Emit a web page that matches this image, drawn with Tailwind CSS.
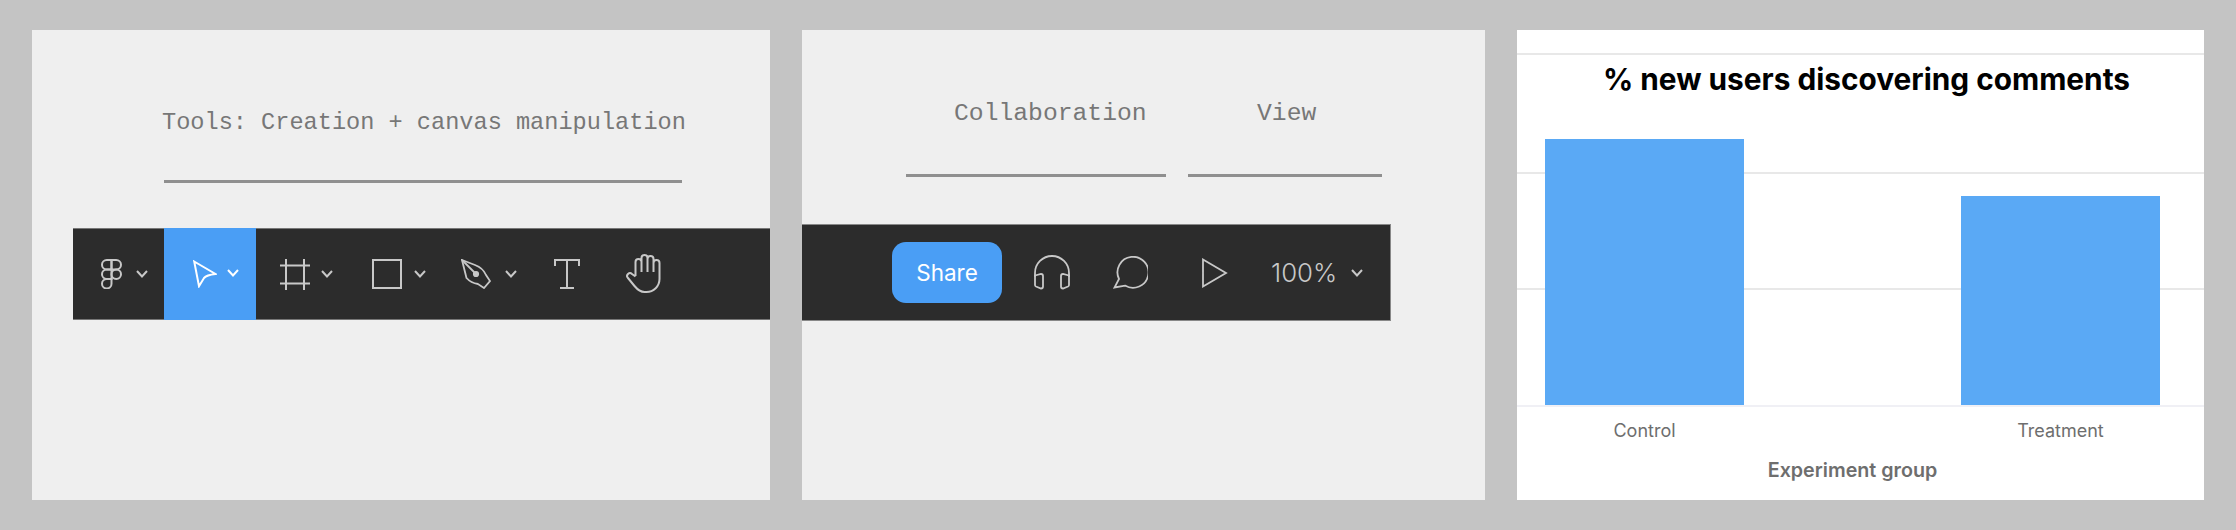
<!DOCTYPE html>
<html lang="en">
<head>
    <meta charset="UTF-8">
    <title>Toolbar and experiment results</title>
    <script src="https://cdn.jsdelivr.net/npm/@tailwindcss/browser@4"></script>
</head>
<body class="bg-[#c4c4c4] font-['Inter',sans-serif]">
    <div class="flex h-[530px] w-[2236px] gap-8 px-8 py-[30px]">

        <!-- Tools panel -->
        <div class="w-[738px] bg-[#efefef] flex flex-col">
            <div class="ml-[130px] mt-[77px] h-8 leading-8 text-[23.6px] text-[#777] font-['Liberation_Mono',monospace] whitespace-nowrap">Tools: Creation + canvas manipulation</div>
            <div class="ml-[132px] mt-[41px] h-[3px] w-[518px] bg-[#8f8f8f]"></div>
            <div class="mt-[45px] ml-[41px] h-[92px] bg-[#2c2c2c] border-y border-[#777] flex items-center text-[#c8c8c8]">
                <div class="w-[91px] flex items-center pl-7">
                    <svg class="w-[21px] h-[30px]" viewBox="0 0 21 30" fill="none" stroke="currentColor" stroke-width="2">
                        <path d="M10.5 1H5.75a4.75 4.75 0 0 0 0 9.5h4.75z"/>
                        <path d="M10.5 1h4.75a4.75 4.75 0 0 1 0 9.5h-4.75z"/>
                        <path d="M10.5 10.5H5.75a4.75 4.75 0 0 0 0 9.5h4.75z"/>
                        <circle cx="15.25" cy="15.25" r="4.75"/>
                        <path d="M10.5 20H5.75a4.75 4.75 0 1 0 4.75 4.75z"/>
                    </svg>
                    <svg class="w-[12px] h-[8px] ml-[14px]" viewBox="0 0 12 8" fill="none" stroke="currentColor" stroke-width="2"><path d="M1 1l5 5.5L11 1"/></svg>
                </div>
                <div class="w-[92px] h-[92px] bg-[#4a9ef5] flex items-center pl-[29px] text-white">
                    <svg class="w-[24px] h-[28px]" viewBox="0 0 24 28" fill="none" stroke="currentColor" stroke-width="2"><path d="M1.2 1.5L22.5 14Q13.5 15 11 18L6 26.2z"/></svg>
                    <svg class="w-[12px] h-[8px] ml-[10px] -mt-[3px]" viewBox="0 0 12 8" fill="none" stroke="currentColor" stroke-width="2"><path d="M1 1l5 5.5L11 1"/></svg>
                </div>
                <div class="flex items-center ml-[24px]">
                    <svg class="w-[30px] h-[31px]" viewBox="0 0 30 31" fill="none" stroke="currentColor" stroke-width="2"><path d="M0 6.5h30M0 24.5h30M6 0v31M24 0v31"/></svg>
                    <svg class="w-[12px] h-[8px] ml-[11px]" viewBox="0 0 12 8" fill="none" stroke="currentColor" stroke-width="2"><path d="M1 1l5 5.5L11 1"/></svg>
                </div>
                <div class="flex items-center ml-[39px]">
                    <svg class="w-[30px] h-[30px]" viewBox="0 0 30 30" fill="none" stroke="currentColor" stroke-width="2"><rect x="1" y="1" width="28" height="28"/></svg>
                    <svg class="w-[12px] h-[8px] ml-[12px]" viewBox="0 0 12 8" fill="none" stroke="currentColor" stroke-width="2"><path d="M1 1l5 5.5L11 1"/></svg>
                </div>
                <div class="flex items-center ml-[35px]">
                    <svg class="w-[30px] h-[30px]" viewBox="0 0 30 30" fill="none" stroke="currentColor" stroke-width="1.8">
                        <path d="M1 1l13 5q8 3 11 10l4 6-6 7-6-4Q10 24 5.500 19z"/>
                        <path d="M1 1l13 13"/>
                        <circle cx="15" cy="15" r="2.200" fill="currentColor"/>
                    </svg>
                    <svg class="w-[12px] h-[8px] ml-[14px]" viewBox="0 0 12 8" fill="none" stroke="currentColor" stroke-width="2"><path d="M1 1l5 5.5L11 1"/></svg>
                </div>
                <svg class="w-[26px] h-[30px] ml-[37px]" viewBox="0 0 26 30" fill="none" stroke="currentColor" stroke-width="2"><path d="M1 7V1h24v6M13 1v28M6 29h14"/></svg>
                <svg class="w-[36px] h-[40px] ml-[46px]" viewBox="0 0 36 40" fill="none" stroke="currentColor" stroke-width="2">
                    <path d="M9.500 22V8a3 3 0 0 1 6 0v10M15.500 8V4a3 3 0 0 1 6 0v14M21.500 5a3 3 0 0 1 6 0v13M27.500 9a3 3 0 0 1 6 0v16a13 13 0 0 1-13 13h-2c-5 0-7.500-3-10-6L2 24a2.800 2.800 0 0 1 4-4l3.500 2.500"/>
                </svg>
            </div>
        </div>

        <!-- Collaboration + view panel -->
        <div class="w-[683px] bg-[#efefef] flex flex-col">
            <div class="flex ml-[104px] mt-[67px] gap-[22px]">
                <div class="w-[260px]">
                    <div class="ml-[48px] h-8 leading-8 text-[24.7px] text-[#777] font-['Liberation_Mono',monospace]">Collaboration</div>
                    <div class="mt-[45px] h-[3px] bg-[#8f8f8f]"></div>
                </div>
                <div class="w-[194px]">
                    <div class="ml-[69px] h-8 leading-8 text-[24.7px] text-[#777] font-['Liberation_Mono',monospace]">View</div>
                    <div class="mt-[45px] h-[3px] bg-[#8f8f8f]"></div>
                </div>
            </div>
            <div class="mt-[47px] w-[589px] h-[97px] bg-[#2c2c2c] border border-l-0 border-[#888] flex items-center text-[#c8c8c8]">
                <div class="ml-[90px] w-[110px] h-[61px] rounded-[14px] bg-[#4a9ef5] text-white text-[22.5px] flex items-center justify-center">Share</div>
                <svg class="w-[36px] h-[35px] ml-[32px]" viewBox="0 0 36 35" fill="none" stroke="currentColor" stroke-width="1.800">
                    <path d="M1 22v-4a17 17 0 0 1 34 0v4"/>
                    <path d="M1 20.500l6 -1.500q2 0 2 2v10.500q0 2-2 2l-5-2q-1-.5-1-1.500z"/>
                    <path d="M35 20.500l-6 -1.500q-2 0-2 2v10.500q0 2 2 2l5-2q1-.5 1-1.500z"/>
                </svg>
                <svg class="w-[35px] h-[33px] ml-[43px]" viewBox="0 0 35 33" fill="none" stroke="currentColor" stroke-width="1.800">
                    <path d="M6 23A15.500 15.500 0 1 1 12 29.600L1.500 31.500z"/>
                </svg>
                <svg class="w-[26px] h-[30px] ml-[54px]" viewBox="0 0 26 30" fill="none" stroke="currentColor" stroke-width="1.800"><path d="M1 1.500L24 15 1 28.500z"/></svg>
                <div class="ml-[43px] text-[25.8px] font-light leading-none">100%</div>
                <svg class="w-[12px] h-[8px] ml-[14px]" viewBox="0 0 12 8" fill="none" stroke="currentColor" stroke-width="2"><path d="M1 1l5 5.500L11 1"/></svg>
            </div>
        </div>

        <!-- Experiment chart -->
        <div class="relative w-[687px] bg-white flex flex-col overflow-hidden">
            <div class="absolute left-0 right-0 top-[23px] h-[2px] bg-[#e8e8e8]"></div>
            <div class="absolute left-0 right-0 top-[142px] h-[2px] bg-[#e8e8e8]"></div>
            <div class="absolute left-0 right-0 top-[258px] h-[2px] bg-[#e8e8e8]"></div>
            <div class="absolute left-0 right-0 top-[375px] h-[2px] bg-[#f0f0f5]"></div>
            <div class="relative mt-[29px] pl-3 h-10 leading-10 text-center text-[29.8px] font-bold text-black whitespace-nowrap">% new users discovering comments</div>
            <div class="relative mt-10 h-[266px] pl-7 pr-11 flex items-end justify-between">
                <div class="w-[199px] h-[266px] bg-[#5aa9f5]"></div>
                <div class="w-[199px] h-[209px] bg-[#5aa9f5]"></div>
            </div>
            <div class="relative mt-[14px] pl-7 pr-11 flex justify-between text-[18px] leading-6 text-[#6e6e6e]">
                <div class="w-[199px] text-center">Control</div>
                <div class="w-[199px] text-center">Treatment</div>
            </div>
            <div class="relative mt-[15px] pl-7 pr-11 text-center text-[19.7px] leading-6 font-semibold text-[#6e6e6e]">Experiment group</div>
        </div>
    </div>
</body>
</html>
